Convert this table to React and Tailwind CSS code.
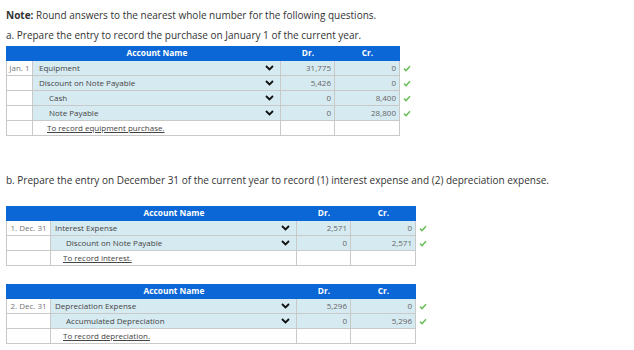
import React from "react";

const Chevron = () => (
  <svg width="9" height="6" viewBox="0 0 9 6" className="shrink-0">
    <path d="M1 1 L4.5 4.5 L8 1" fill="none" stroke="#111" strokeWidth="1.8" />
  </svg>
);

const Check = () => (
  <svg width="8" height="7" viewBox="0 0 8 7">
    <path d="M1 3.6 L3 5.6 L7 1.2" fill="none" stroke="#6cbf5a" strokeWidth="1.5" />
  </svg>
);

function Table({ dateW, acctW, padL, indentL, rows, memo, memoL }) {
  return (
    <div className="flex flex-col">
      <div className="flex h-[15px] items-stretch">
        <div className="flex bg-[#0b67d6] text-white font-bold text-[8.3px] items-center">
          <div style={{ width: dateW }} />
          <div style={{ width: acctW }} className="text-center">Account Name</div>
          <div className="w-[54px] text-center">Dr.</div>
          <div className="w-[65px] text-center">Cr.</div>
        </div>
      </div>
      {rows.map((r, i) => (
        <div key={i} className="flex h-[15px] items-stretch">
          <div
            style={{ width: dateW }}
            className="border-l border-r border-b border-[#c9c9c9] bg-white flex items-center justify-center text-[#777] text-[8px] box-border whitespace-nowrap"
          >
            {r.date}
          </div>
          <div
            style={{ width: acctW, paddingLeft: r.indent ? indentL : padL }}
            className="border-r border-b border-[#c9c9c9] bg-[#d6eaf1] flex items-center justify-between pr-[6px] text-[#444] text-[8px] box-border"
          >
            <span>{r.name}</span>
            <Chevron />
          </div>
          <div className="w-[54px] border-r border-b border-[#c9c9c9] bg-[#d6eaf1] flex items-center justify-end pr-[3px] text-[#666] text-[8px] box-border">
            {r.dr}
          </div>
          <div className="w-[65px] border-r border-b border-[#c9c9c9] bg-[#d6eaf1] flex items-center justify-end pr-[3px] text-[#666] text-[8px] box-border">
            {r.cr}
          </div>
          <div className="flex items-center pl-[3px]">
            <Check />
          </div>
        </div>
      ))}
      <div className="flex h-[15px] items-stretch">
        <div
          style={{ width: dateW }}
          className="border-l border-r border-b border-[#c9c9c9] bg-white box-border"
        />
        <div
          style={{ width: acctW, paddingLeft: memoL }}
          className="border-r border-b border-[#c9c9c9] bg-white flex items-center text-[#444] text-[8px] box-border"
        >
          <span className="underline">{memo}</span>
        </div>
        <div className="w-[54px] border-r border-b border-[#c9c9c9] bg-white box-border" />
        <div className="w-[65px] border-r border-b border-[#c9c9c9] bg-white box-border" />
      </div>
    </div>
  );
}

export default function App() {
  return (
    <div
      className="w-[634px] h-[350px] bg-white px-[6px] overflow-hidden"
      style={{ fontFamily: '"Open Sans", "Liberation Sans", sans-serif' }}
    >
      <div className="mt-[9px] h-[12px] leading-[12px] text-[10px] text-[#333]">
        <span className="font-bold">Note:</span> Round answers to the nearest whole number for the following questions.
      </div>
      <div className="mt-[8px] h-[12px] leading-[12px] text-[10px] text-[#333]">
        a. Prepare the entry to record the purchase on January 1 of the current year.
      </div>
      <div className="mt-[5px]">
        <Table
          dateW={27}
          acctW={248}
          padL={6}
          indentL={16}
          memoL={14}
          memo="To record equipment purchase."
          rows={[
            { date: "Jan. 1", name: "Equipment", dr: "31,775", cr: "0" },
            { date: "", name: "Discount on Note Payable", dr: "5,426", cr: "0" },
            { date: "", name: "Cash", dr: "0", cr: "8,400", indent: true },
            { date: "", name: "Note Payable", dr: "0", cr: "28,800", indent: true },
          ]}
        />
      </div>
      <div className="mt-[38px] h-[12px] leading-[12px] text-[10px] text-[#333]">
        b. Prepare the entry on December 31 of the current year to record (1) interest expense and (2) depreciation expense.
      </div>
      <div className="mt-[20px]">
        <Table
          dateW={45}
          acctW={246}
          padL={4}
          indentL={15}
          memoL={12}
          memo="To record interest."
          rows={[
            { date: "1. Dec. 31", name: "Interest Expense", dr: "2,571", cr: "0" },
            { date: "", name: "Discount on Note Payable", dr: "0", cr: "2,571", indent: true },
          ]}
        />
      </div>
      <div className="mt-[18px]">
        <Table
          dateW={45}
          acctW={246}
          padL={4}
          indentL={15}
          memoL={12}
          memo="To record depreciation."
          rows={[
            { date: "2. Dec. 31", name: "Depreciation Expense", dr: "5,296", cr: "0" },
            { date: "", name: "Accumulated Depreciation", dr: "0", cr: "5,296", indent: true },
          ]}
        />
      </div>
    </div>
  );
}
